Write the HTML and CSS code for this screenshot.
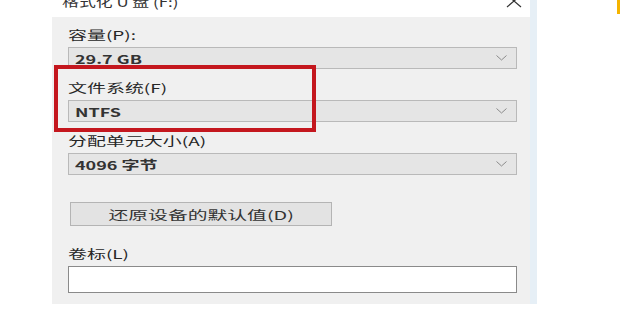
FILE: index.html
```html
<!DOCTYPE html>
<html lang="zh-CN">
  <head>
    <meta charset="UTF-8" />
    <title>格式化 U 盘 (F:)</title>
    <link rel="stylesheet" href="styles.css">
  </head>
  <body>
    <div class="page">
      <div class="dialog">
        <div class="titlebar">
          <span class="title"><span class="wide">格式化 U 盘 (F:)</span></span>
          <svg class="close" width="16" height="10" viewBox="0 0 16 10">
            <path d="M1 -4 L15 8 M15 -4 L1 8" stroke="#333" stroke-width="1.2" fill="none" />
          </svg>
        </div>
        <div class="content">
          <div class="field">
            <div class="label"><span class="wide">容量(P):</span></div>
            <div class="select">
              <span class="wide">29.7 GB</span>
              <svg class="chev" width="11" height="6" viewBox="0 0 11 6"><polyline points="0.5,0.5 5.5,5 10.5,0.5" stroke="#8a8a8a" fill="none" /></svg>
            </div>
          </div>
          <div class="field">
            <div class="label"><span class="wide">文件系统(F)</span></div>
            <div class="select">
              <span class="wide">NTFS</span>
              <svg class="chev" width="11" height="6" viewBox="0 0 11 6"><polyline points="0.5,0.5 5.5,5 10.5,0.5" stroke="#8a8a8a" fill="none" /></svg>
            </div>
          </div>
          <div class="field">
            <div class="label"><span class="wide">分配单元大小(A)</span></div>
            <div class="select">
              <span class="wide">4096 字节</span>
              <svg class="chev" width="11" height="6" viewBox="0 0 11 6"><polyline points="0.5,0.5 5.5,5 10.5,0.5" stroke="#8a8a8a" fill="none" /></svg>
            </div>
          </div>
          <button type="button" class="reset"><span class="wide mid">还原设备的默认值(D)</span></button>
          <div class="field">
            <div class="label"><span class="wide">卷标(L)</span></div>
            <div class="textbox"></div>
          </div>
        </div>
        <!-- red highlight around the file system field -->
        <div class="highlight"></div>
      </div>
      <div class="edge"></div>
    </div>
  </body>
</html>
```

FILE: styles.css
```css
body {
  margin: 0;
  background: #fff;
  font-family: "Noto Sans CJK SC", "Noto Sans", sans-serif;
  color: #262626;
}
.page {
  display: flex;
  align-items: flex-start;
  padding-left: 52px;
  height: 309px;
  overflow: hidden;
}
.dialog {
  position: relative;
  width: 478px;
  border-right: 7px solid #e6eff6;
}
/* the screenshot is stretched sideways, so text is too */
.wide {
  display: inline-block;
  transform: scaleX(1.58);
  transform-origin: left center;
  white-space: nowrap;
}
.wide.mid {
  transform: scaleX(1.65);
  transform-origin: center center;
}
.titlebar {
  height: 17px;
  background: #fff;
  display: flex;
  justify-content: space-between;
  align-items: flex-end;
  padding: 0 8px 0 10px;
  overflow: hidden;
}
.title {
  font-size: 12.5px;
  line-height: 16px;
  margin-bottom: 7px;
  color: #333;
}
.title .wide {
  transform: scaleX(1.35);
}
.close {
  display: block;
  margin-bottom: 8px;
}
.content {
  background: #f0f0f0;
  padding: 10px 13px 11px 16px;
}
.field + .field {
  margin-top: 11px;
}
.label {
  font-size: 12px;
  line-height: 16px;
  margin-bottom: 4px;
}
.select {
  height: 22px;
  box-sizing: border-box;
  border: 1px solid #b9b9b9;
  background: #e5e5e5;
  display: flex;
  align-items: center;
  justify-content: space-between;
  padding: 0 9px 0 6px;
  font-size: 12px;
  font-weight: bold;
  color: #333;
}
.select .wide {
  transform: scaleX(1.5);
}
.chev {
  display: block;
}
.reset {
  display: block;
  margin: 27px 0 20px 2px;
  width: 262px;
  height: 24px;
  border: 1px solid #b4b4b4;
  background: #e3e3e3;
  font-family: inherit;
  font-size: 12px;
  color: #333;
  padding: 0;
}
.textbox {
  height: 27px;
  box-sizing: border-box;
  background: #fff;
  border: 1px solid #8a8a8a;
}
.highlight {
  position: absolute;
  left: 2px;
  top: 65px;
  width: 254px;
  height: 59px;
  border: 4px solid #c4171e;
}
.edge {
  margin-left: auto;
  width: 3px;
  height: 14px;
  background: #f5b400;
}
```
